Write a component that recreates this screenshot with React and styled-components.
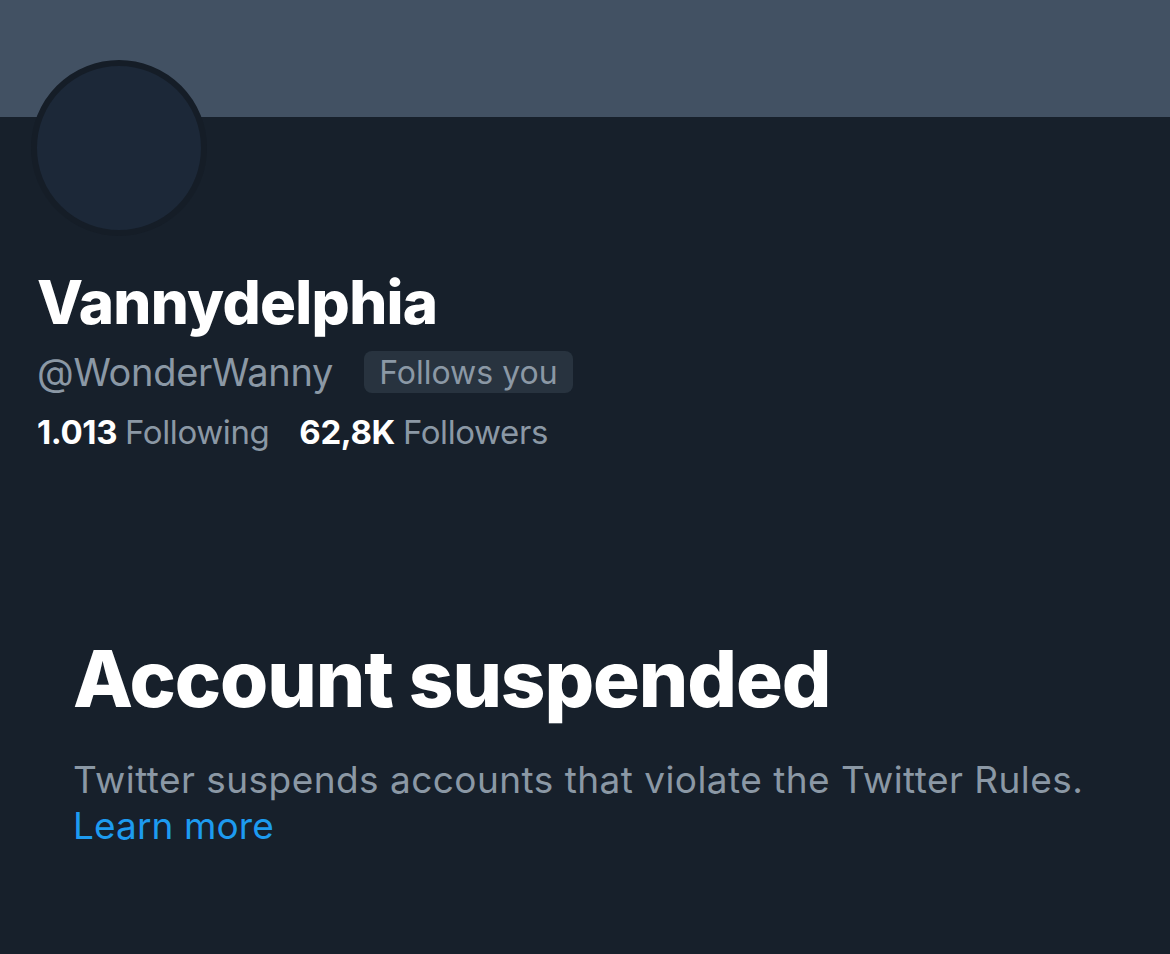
import styled, { createGlobalStyle } from 'styled-components';

const Global = createGlobalStyle`
    html, body {
        margin: 0;
        padding: 0;
        background: #17202b;
    }
    body {
        font-family: Inter, "Noto Sans", "Liberation Sans", sans-serif;
    }
`;

const Page = styled.div`
    width: 1170px;
    height: 954px;
    background: #17202b;
    overflow: hidden;
`;

const Banner = styled.div`
    height: 117px;
    background: #425163;
`;

const Profile = styled.div`
    padding: 0 37px;
`;

const AvatarRing = styled.div`
    width: 164px;
    height: 164px;
    margin-top: -57px;
    margin-left: -6px;
    border-radius: 50%;
    border: 6px solid #151d27;
    background: #1c2838;
`;

const Name = styled.h1`
    margin: 30px 0 0;
    font-size: 60px;
    font-weight: 800;
    line-height: 72px;
    color: #ffffff;
    letter-spacing: -0.7px;
`;

const HandleRow = styled.div`
    display: flex;
    align-items: center;
    gap: 31px;
    margin-top: 11px;
`;

const Handle = styled.span`
    font-size: 38px;
    color: #8b98a5;
    letter-spacing: -0.3px;
`;

const Badge = styled.span`
    display: inline-flex;
    align-items: center;
    height: 42px;
    padding: 0 15px;
    border-radius: 8px;
    background: #28333f;
    color: #8b98a5;
    font-size: 32px;
`;

const Stats = styled.div`
    display: flex;
    gap: 30px;
    margin-top: 17px;
    font-size: 33px;
`;

const Stat = styled.span`
    color: #8b98a5;
    letter-spacing: -0.4px;

    b {
        color: #ffffff;
        font-weight: 700;
        margin-right: 8px;
    }
`;

const Notice = styled.div`
    padding: 182px 73px 0;
`;

const Title = styled.h2`
    margin: 0;
    font-size: 78px;
    font-weight: 800;
    line-height: 90px;
    color: #ffffff;
    letter-spacing: -1.1px;
`;

const Body = styled.p`
    margin: 33px 0 0;
    font-size: 37px;
    line-height: 46px;
    color: #8b98a5;
    letter-spacing: 0.45px;
`;

const Link = styled.a`
    color: #1d9bf0;
    text-decoration: none;
    letter-spacing: 0.1px;
`;

export default function App() {
    return (
        <Page>
            <Global />
            <Banner />
            <Profile>
                <AvatarRing />
                <Name>Vannydelphia</Name>
                <HandleRow>
                    <Handle>@WonderWanny</Handle>
                    <Badge>Follows you</Badge>
                </HandleRow>
                <Stats>
                    <Stat><b>1.013</b>Following</Stat>
                    <Stat><b>62,8K</b>Followers</Stat>
                </Stats>
            </Profile>
            <Notice>
                <Title>Account suspended</Title>
                <Body>
                    Twitter suspends accounts that violate the Twitter Rules.
                    <br />
                    <Link href="#">Learn more</Link>
                </Body>
            </Notice>
        </Page>
    );
}
